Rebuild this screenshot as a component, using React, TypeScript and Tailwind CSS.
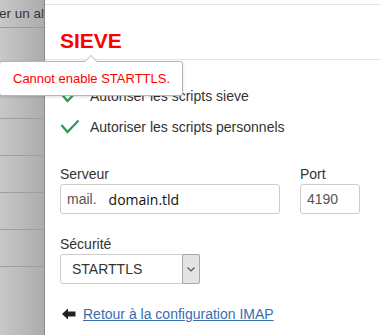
import React from "react";

const Check = () => (
  <svg width="20" height="16" viewBox="0 0 20 16" className="mt-[2px] shrink-0">
    <polyline points="1.5,6 7.5,13 18.5,1.5" fill="none" stroke="#2a9a5a" strokeWidth="2.2" />
  </svg>
);

const ArrowLeft = () => (
  <svg width="14" height="12" viewBox="0 0 14 12" className="shrink-0">
    <polygon points="0,6 6,0.5 6,3.5 13.5,3.5 13.5,8.5 6,8.5 6,11.5" fill="#222" />
  </svg>
);

export default function App() {
  return (
    <div
      className="relative w-[381px] h-[335px] flex overflow-hidden bg-white text-[#333]"
      style={{ fontFamily: '"Liberation Sans", Arial, sans-serif' }}
    >
      {/* left background list */}
      <div className="w-[45px] shrink-0 h-full overflow-hidden bg-gradient-to-r from-[#c8c8c8] to-[#acacac] border-r border-[#8a8a8a] flex flex-col">
        <div className="h-[28px] flex items-center pt-[2px] whitespace-nowrap text-[13.5px] text-[#333] -ml-[1px] border-b border-[#999]">
          er un alias
        </div>
        <div className="h-[91px] border-b border-[#9e9e9e]" />
        <div className="h-[37px] border-b border-[#9e9e9e]" />
        <div className="h-[37px] border-b border-[#9e9e9e]" />
        <div className="h-[37px] border-b border-[#9e9e9e]" />
        <div className="h-[37px] border-b border-[#9e9e9e]" />
      </div>

      {/* modal */}
      <div className="flex-1 flex flex-col bg-white">
        <div className="h-[4px]" />
        <div className="border-t border-[#e5e5e5] h-[56px] border-b pt-[24px] pl-[15px]">
          <div className="text-[21px] leading-[24px] font-bold text-[#ff0000]">SIEVE</div>
        </div>

        <div className="px-[15px] flex flex-col text-[14px]">
          <div className="mt-[26px] flex items-start gap-[10px] h-[20px]">
            <Check />
            <span className="leading-[20px]">Autoriser les scripts sieve</span>
          </div>
          <div className="mt-[11px] flex items-start gap-[10px] h-[20px]">
            <Check />
            <span className="leading-[20px]">Autoriser les scripts personnels</span>
          </div>

          <div className="mt-[27px] flex gap-[20px]">
            <div className="flex flex-col">
              <div className="leading-[20px]">Serveur</div>
              <div className="w-[220px] h-[30px] border border-[#ccc] rounded-[3px] flex items-center pl-[6px]">
                <span className="text-[#555]">mail.</span>
                <span
                  className="ml-[12px] font-medium text-[#111]"
                  style={{ fontFamily: '"Open Sans", "Noto Sans", sans-serif' }}
                >
                  domain.tld
                </span>
              </div>
            </div>
            <div className="flex flex-col">
              <div className="leading-[20px]">Port</div>
              <div className="w-[60px] h-[30px] border border-[#ccc] rounded-[3px] flex items-center pl-[6px] text-[#555]">
                4190
              </div>
            </div>
          </div>

          <div className="mt-[20px] leading-[20px]">Sécurité</div>
          <div className="w-[140px] h-[30px] border border-[#ccc] rounded-[3px] flex items-stretch">
            <div className="flex-1 flex items-center pl-[11px] text-[#333]">STARTTLS</div>
            <div className="w-[18px] bg-[#e4e4e4] border border-[#a8a8a8] rounded-[2px] -my-[1px] -mr-[1px] flex items-center justify-center">
              <svg width="8" height="5" viewBox="0 0 8 5">
                <polyline points="0.5,0.5 4,4 7.5,0.5" fill="none" stroke="#555" strokeWidth="1.1" />
              </svg>
            </div>
          </div>

          <div className="mt-[20px] flex items-center h-[20px] pl-[2px] gap-[7px]">
            <ArrowLeft />
            <a className="leading-[20px] text-[#3a6db0] underline" href="#">
              Retour à la configuration IMAP
            </a>
          </div>
        </div>
      </div>

      {/* tooltip */}
      <div className="absolute left-[-1px] top-[61px] w-[184px] h-[35px] bg-white border border-[#b5b5b5] rounded-[3px] shadow-[0_1px_3px_rgba(0,0,0,0.15)] flex items-center pl-[13px]">
        <span className="text-[13px] text-[#ff0000]">Cannot enable STARTTLS.</span>
        <div className="absolute left-[84px] top-[-7px] w-0 h-0 border-x-[7px] border-x-transparent border-b-[7px] border-b-[#b5b5b5]" />
        <div className="absolute left-[85px] top-[-6px] w-0 h-0 border-x-[6px] border-x-transparent border-b-[6px] border-b-white" />
      </div>
    </div>
  );
}
